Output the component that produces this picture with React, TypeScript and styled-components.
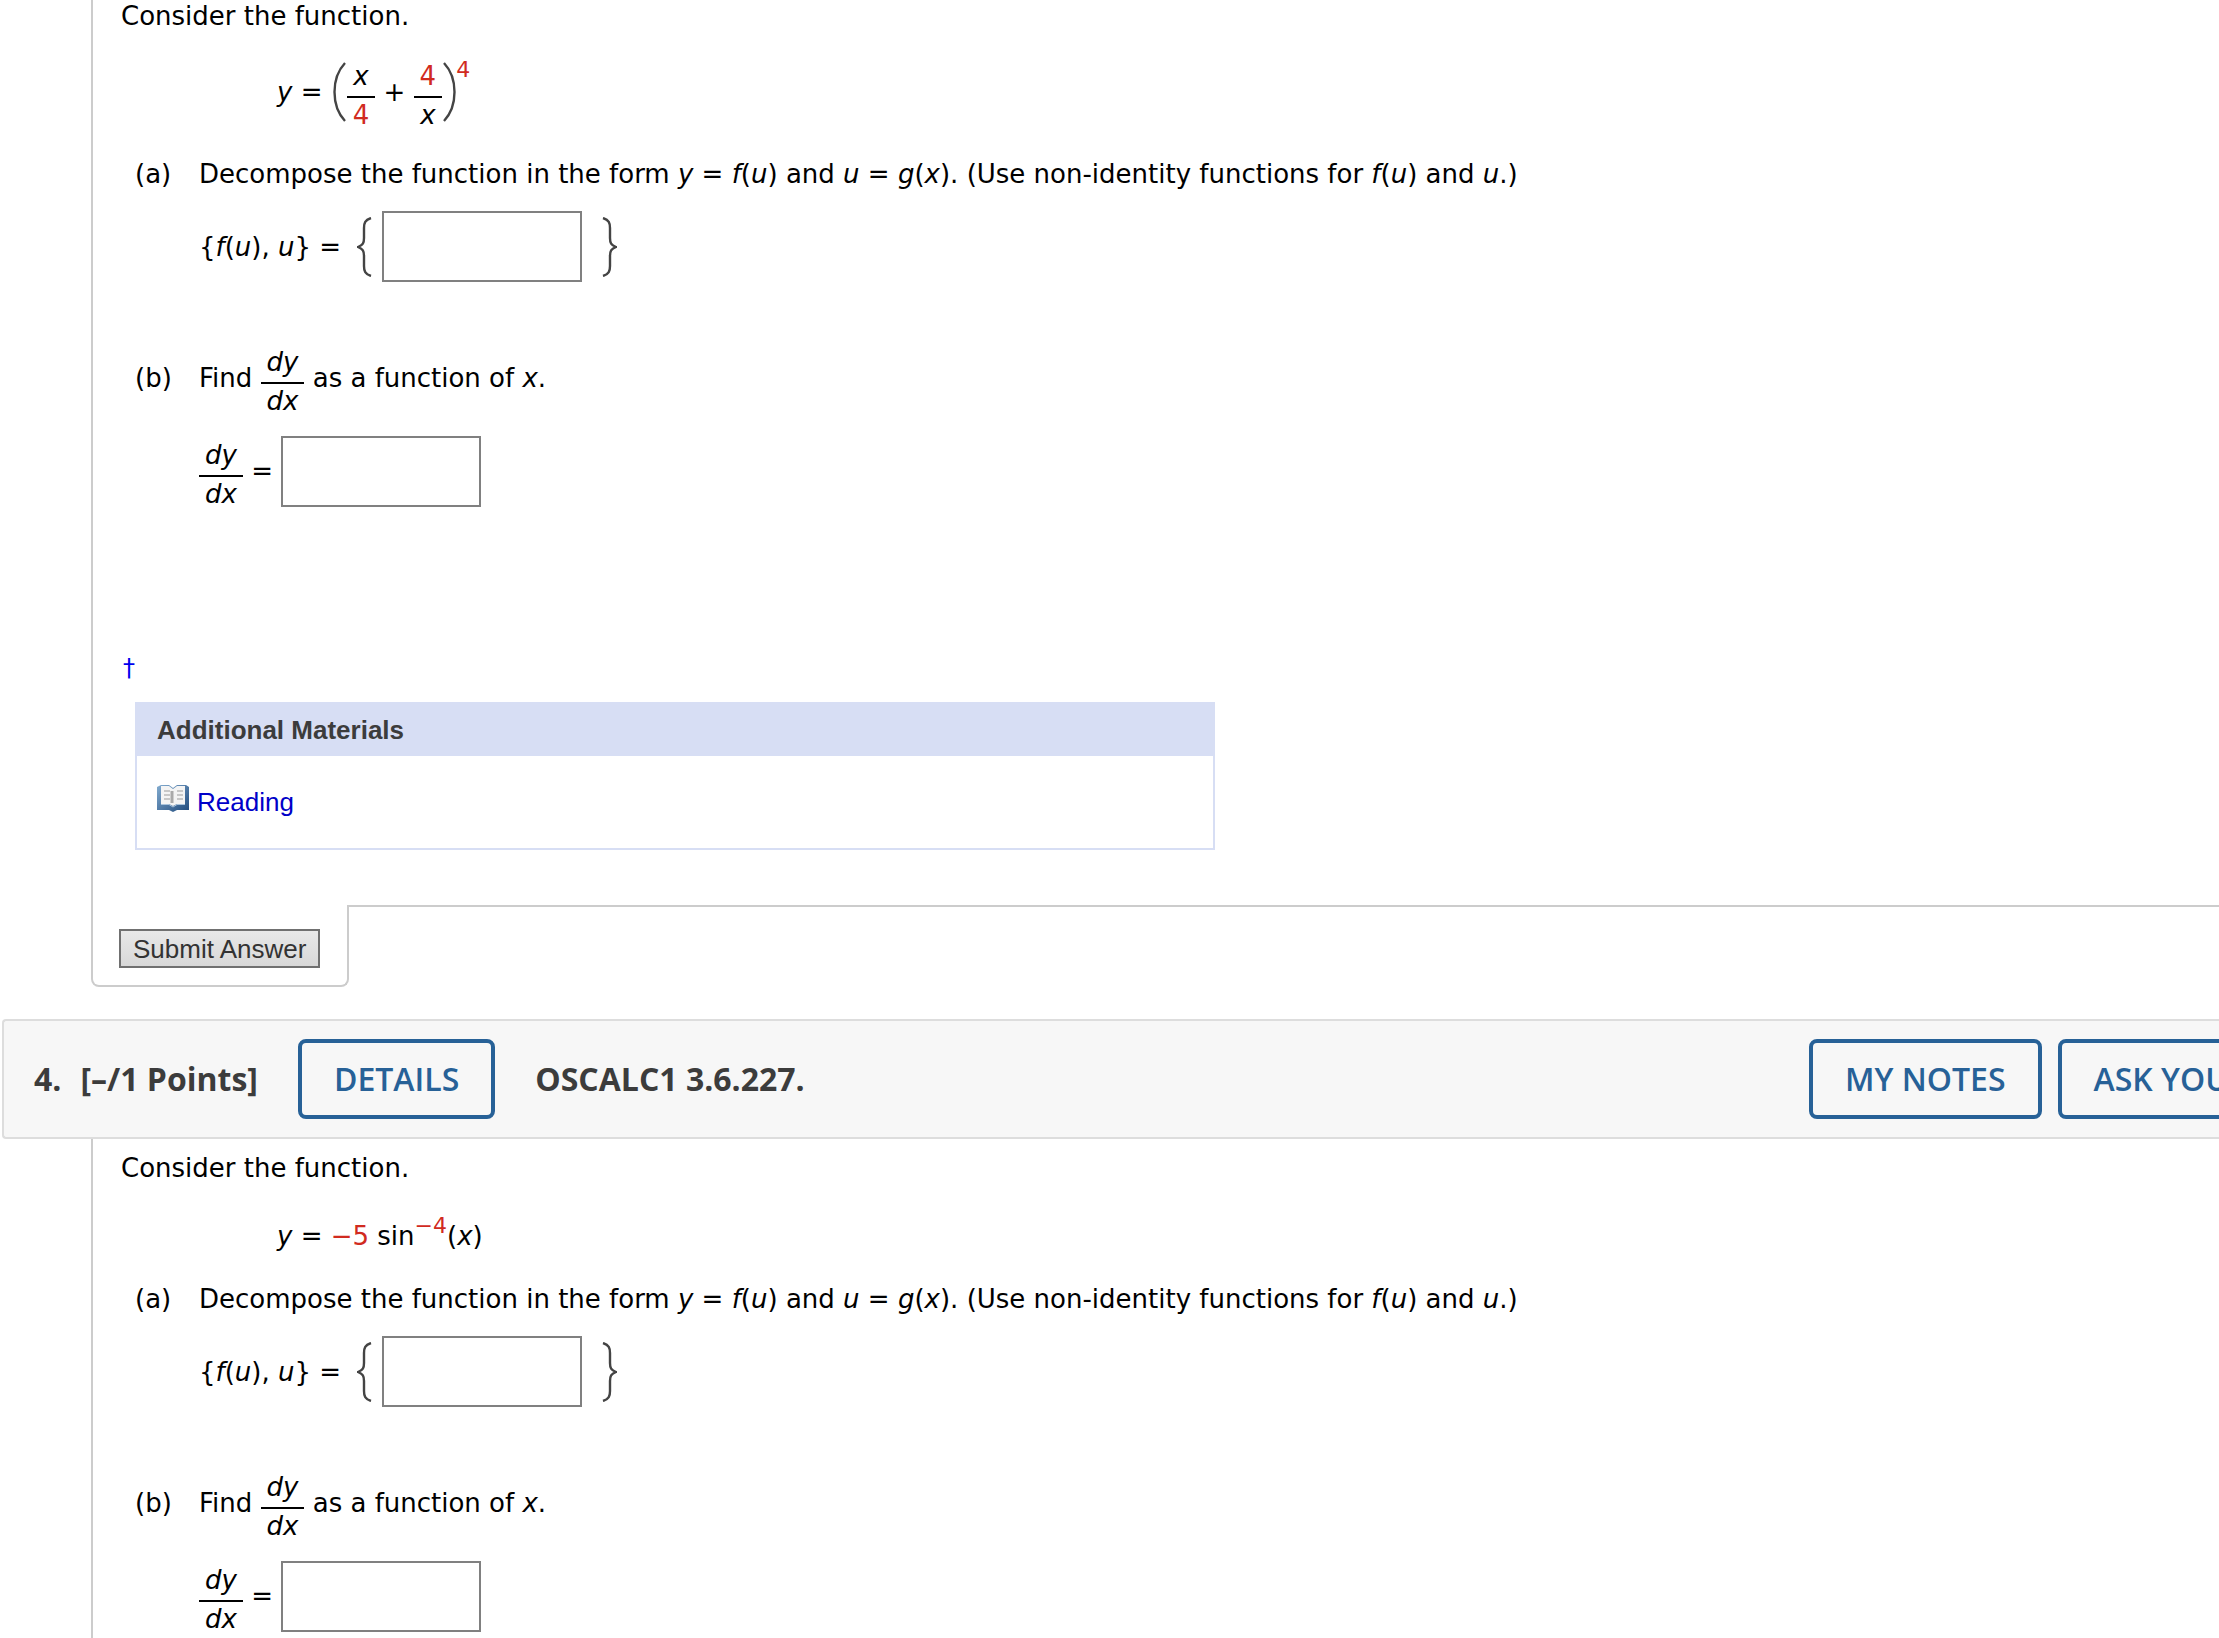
import React from "react";
import styled, { createGlobalStyle } from "styled-components";

const GlobalStyle = createGlobalStyle`
  * { box-sizing: border-box; }
  body {
    margin: 0;
    background: #fff;
    color: #000;
    font-family: Verdana, "DejaVu Sans", sans-serif;
    font-size: 26px;
    line-height: 32px;
  }
`;

const Page = styled.main`
  display: flex;
  flex-direction: column;
  min-height: 100vh;
  overflow: hidden;
`;

const Question = styled.section<{ $grow?: boolean }>`
  display: flex;
  flex-direction: column;
  flex-grow: ${(p) => (p.$grow ? 1 : 0)};
  margin-left: 91px;
  padding: ${(p) => (p.$grow ? "13px 0 0 28px" : "0 0 55px 28px")};
  border-left: 2px solid #ccc;
`;

const Prompt = styled.p`
  margin: 0;
`;

const MathRow = styled.div`
  display: flex;
  align-items: center;
  white-space: pre;
`;

const Equation = styled(MathRow)<{ $simple?: boolean }>`
  margin: ${(p) => (p.$simple ? "36px 0 31px 156px" : "21px 0 27px 156px")};
`;

const Part = styled.div`
  display: grid;
  grid-template-columns: 64px 1fr;
  align-items: center;
  padding-left: 14px;
`;

const PartBody = styled(MathRow)<{ $gap: number }>`
  margin: ${(p) => p.$gap}px 0 0 78px;
`;

const PartB = styled(Part)`
  margin-top: 57px;
`;

const Red = styled.span`
  color: #d12b1f;
`;

const Sup = styled.sup`
  color: #d12b1f;
  font-size: 22px;
  line-height: 0;
  vertical-align: 12px;
`;

const Power = styled.sup`
  align-self: flex-start;
  color: #d12b1f;
  font-size: 22px;
  line-height: 34px;
`;

const FractionBox = styled.span`
  display: inline-flex;
  flex-direction: column;
  margin-top: 7px;
  text-align: center;
`;

const Numerator = styled.span`
  padding: 0 6px 4px;
  border-bottom: 2px solid #000;
`;

const Denominator = styled.span`
  padding: 1px 6px 0;
`;

const AnswerInput = styled.input`
  width: 200px;
  height: 71px;
  padding: 0 10px;
  border: 2px solid #808080;
  border-radius: 0;
  background: #fff;
  font: inherit;
`;

const Delimiter = styled.svg`
  flex: none;
  fill: none;
  stroke: #444;
  stroke-width: 2.4;
`;

const OpenParen = styled(Delimiter)`
  margin-left: 2px;
`;

const OpenBrace = styled(Delimiter)`
  margin: 0 10px 0 8px;
`;

const CloseBrace = styled(Delimiter)`
  margin-left: 20px;
`;

const Dagger = styled.a`
  align-self: flex-start;
  margin: 142px 0 18px 2px;
  color: #0000ee;
  font-size: 24px;
  text-decoration: none;
`;

const Materials = styled.aside`
  width: 100%;
  max-width: 1080px;
  margin-left: 14px;
  border: 2px solid #d7def4;
  font-family: Arial, "Liberation Sans", sans-serif;
`;

const MaterialsTitle = styled.h3`
  margin: 0;
  padding: 10px 20px;
  background: #d7def4;
  color: #3c3c3c;
  font-size: 26px;
  line-height: 32px;
`;

const MaterialsBody = styled.div`
  display: flex;
  padding: 28px 20px;
`;

const ReadingLink = styled.a`
  display: flex;
  gap: 6px;
  color: #0000c8;
  line-height: 36px;
  text-decoration: none;
`;

const Footer = styled.div`
  display: flex;
  margin-left: 91px;
`;

const SubmitTab = styled.div`
  padding: 24px 27px 17px 26px;
  border: solid #ccc;
  border-width: 0 2px 2px;
  border-radius: 0 0 8px 8px;
`;

const FooterRule = styled.div`
  flex: 1;
  margin-left: -2px;
  border-top: 2px solid #ccc;
`;

const SubmitButton = styled.button`
  display: block;
  height: 39px;
  padding: 0 12px;
  border: 2px solid #707070;
  background: linear-gradient(#e8e8e8, #d8d8d8);
  color: #333;
  font: 26px/32px Arial, "Liberation Sans", sans-serif;
`;

const QuestionHeader = styled.header`
  display: flex;
  align-items: center;
  margin: 32px 0 0 2px;
  padding: 18px 0 18px 30px;
  border: 2px solid #ddd;
  border-right: 0;
  border-radius: 4px 0 0 4px;
  background: #f7f7f7;
  color: #3c3c3c;
  font-family: "Open Sans", sans-serif;
  font-size: 32px;
  font-weight: 700;
  white-space: nowrap;
`;

const Points = styled.span`
  margin: 0 40px 0 19px;
`;

const Source = styled.span`
  flex: 1;
  padding-left: 40px;
`;

const HeaderActions = styled.div`
  display: flex;
  flex: none;
  gap: 16px;
  width: 410px;
`;

const OutlineButton = styled.button`
  flex: none;
  height: 80px;
  padding: 0 32px;
  border: 4px solid #276197;
  border-radius: 8px;
  background: transparent;
  color: #276197;
  font: 600 32px/40px "Open Sans", sans-serif;
`;

const Fraction = ({ top, bottom }: { top: React.ReactNode; bottom: React.ReactNode }) => (
  <FractionBox>
    <Numerator>{top}</Numerator>
    <Denominator>{bottom}</Denominator>
  </FractionBox>
);

const Derivative = () => <Fraction top={<i>dy</i>} bottom={<i>dx</i>} />;

const bracePath = "M14 1C8 3 7 6 7 11V21C7 26 6 28 1 30C6 32 7 34 7 39V49C7 54 8 57 14 59";

const BookIcon = () => (
  <svg width="34" height="28" viewBox="0 0 34 28" aria-hidden="true">
    <defs>
      <linearGradient id="cover" x1="0" y1="0" x2="1" y2="1">
        <stop offset="0" stopColor="#83acd0" />
        <stop offset="1" stopColor="#1f4a7d" />
      </linearGradient>
    </defs>
    <path d="M0 3L4 1H12L16 4L20 1H29L32 3V26H20L16 28L12 26H0Z" fill="url(#cover)" />
    <path d="M4 2H12L16 5L20 2H28V20H20L16 22L12 20H4Z" fill="#f4f4f4" />
    <path d="M4 20.500H12L16 23L20 20.500H28" fill="none" stroke="#a9c3dc" />
    <path d="M7 7H13M7 11H13M7 15H13M20 7H26M20 11H26M20 15H26" stroke="#b9b9b9" strokeWidth="1.500" />
    <path d="M15 7V19" stroke="#aaa" strokeWidth="3" />
  </svg>
);

const QuestionParts = () => (
  <>
    <Part>
      <span>(a)</span>
      <span>
        Decompose the function in the form <i>y</i> = <i>f</i>(<i>u</i>) and <i>u</i> = <i>g</i>(<i>x</i>). (Use
        non-identity functions for <i>f</i>(<i>u</i>) and <i>u</i>.)
      </span>
    </Part>
    <PartBody $gap={21}>
      <span>
        {"{"}
        <i>f</i>(<i>u</i>), <i>u</i>
        {"} = "}
      </span>
      <OpenBrace width="15" height="60" viewBox="0 0 15 60" aria-hidden="true">
        <path d={bracePath} />
      </OpenBrace>
      <AnswerInput type="text" aria-label="f(u), u" />
      <CloseBrace width="15" height="60" viewBox="0 0 15 60" aria-hidden="true">
        <path d={bracePath} transform="matrix(-1 0 0 1 15 0)" />
      </CloseBrace>
    </PartBody>
    <PartB>
      <span>(b)</span>
      <MathRow>
        <span>{"Find "}</span>
        <Derivative />
        <span>
          {" as a function of "}
          <i>x</i>.
        </span>
      </MathRow>
    </PartB>
    <PartBody $gap={15}>
      <Derivative />
      <span>{" = "}</span>
      <AnswerInput type="text" aria-label="dy/dx" />
    </PartBody>
  </>
);

export default function App() {
  return (
    <Page>
      <GlobalStyle />
      <Question>
        <Prompt>Consider the function.</Prompt>
        <Equation>
          <span>
            <i>y</i>
            {" = "}
          </span>
          <OpenParen width="14" height="60" viewBox="0 0 14 60" aria-hidden="true">
            <path d="M12 1C-2 16 -2 44 12 59" />
          </OpenParen>
          <Fraction top={<i>x</i>} bottom={<Red>4</Red>} />
          <span>{" + "}</span>
          <Fraction top={<Red>4</Red>} bottom={<i>x</i>} />
          <Delimiter width="14" height="60" viewBox="0 0 14 60" aria-hidden="true">
            <path d="M2 1C16 16 16 44 2 59" />
          </Delimiter>
          <Power>4</Power>
        </Equation>
        <QuestionParts />
        <Dagger href="#note">†</Dagger>
        <Materials>
          <MaterialsTitle>Additional Materials</MaterialsTitle>
          <MaterialsBody>
            <ReadingLink href="#reading">
              <BookIcon />
              Reading
            </ReadingLink>
          </MaterialsBody>
        </Materials>
      </Question>
      <Footer>
        <SubmitTab>
          <SubmitButton type="button">Submit Answer</SubmitButton>
        </SubmitTab>
        <FooterRule />
      </Footer>
      <QuestionHeader>
        <span>4.</span>
        <Points>[–/1 Points]</Points>
        <OutlineButton type="button">DETAILS</OutlineButton>
        <Source>OSCALC1 3.6.227.</Source>
        <HeaderActions>
          <OutlineButton type="button">MY NOTES</OutlineButton>
          <OutlineButton type="button">ASK YOUR TEACHER</OutlineButton>
        </HeaderActions>
      </QuestionHeader>
      <Question $grow>
        <Prompt>Consider the function.</Prompt>
        <Equation $simple>
          <span>
            <i>y</i>
            {" = "}
            <Red>−5</Red>
            {" sin"}
            <Sup>−4</Sup>(<i>x</i>)
          </span>
        </Equation>
        <QuestionParts />
      </Question>
    </Page>
  );
}
